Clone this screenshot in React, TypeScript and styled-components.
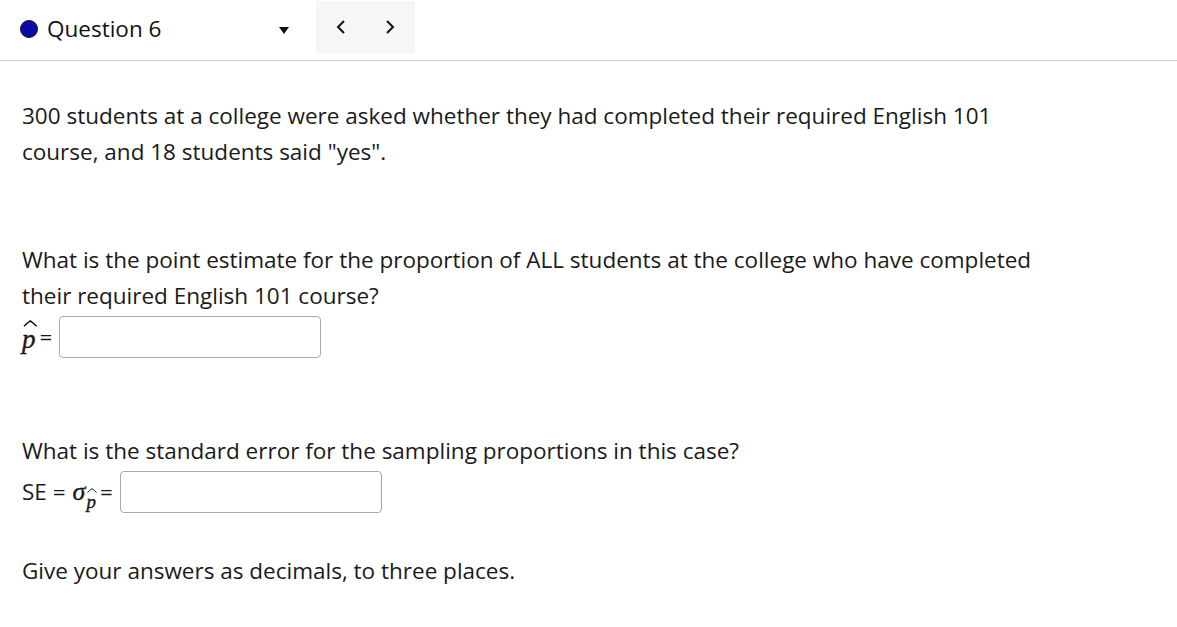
import React, { FC } from "react";
import styled, { createGlobalStyle } from "styled-components";

const GlobalStyle = createGlobalStyle`
  html, body {
    margin: 0;
    padding: 0;
    background: #ffffff;
  }
  body {
    font-family: "Open Sans", "DejaVu Sans", sans-serif;
    color: #1a1a1a;
  }
`;

const StyledHeader = styled.div`
  display: flex;
  align-items: center;
  height: 61px;
  border-bottom: 1px solid #cccccc;
  box-sizing: border-box;
  padding: 0 0 3px 20px;
`;

const StyledDot = styled.span`
  width: 18px;
  height: 18px;
  border-radius: 50%;
  background: #0a0aa8;
  border: 1px solid #111133;
  box-sizing: border-box;
  flex-shrink: 0;
`;

const StyledTitle = styled.span`
  margin-left: 9px;
  font-size: 22.5px;
  width: 232px;
  color: #111111;
`;

const StyledCaret = styled.span`
  width: 0;
  height: 0;
  border-left: 5px solid transparent;
  border-right: 5px solid transparent;
  border-top: 7px solid #111111;
  margin-top: 4px;
`;

const StyledNav = styled.div`
  display: flex;
  align-items: center;
  justify-content: center;
  gap: 19px;
  margin-left: 27px;
  margin-top: -3px;
  width: 99px;
  height: 52px;
  background: #f6f6f6;
`;

const StyledNavButton = styled.button`
  border: none;
  background: transparent;
  padding: 0;
  width: 30px;
  height: 30px;
  display: flex;
  align-items: center;
  justify-content: center;
  cursor: pointer;
`;

const StyledBody = styled.div`
  max-width: 1030px;
  padding: 37px 22px 0 22px;
  font-size: 22.5px;
  line-height: 36px;
  color: #1a1a1a;
`;

const StyledParagraph = styled.p<{ $gap: number }>`
  margin: 0 0 ${({ $gap }) => $gap}px 0;
`;

const StyledAnswerRow = styled.div<{ $gap: number }>`
  display: flex;
  align-items: center;
  height: 46px;
  margin-bottom: ${({ $gap }) => $gap}px;
`;

const StyledMath = styled.span`
  font-family: "Liberation Serif", "DejaVu Serif", serif;
  font-style: italic;
  position: relative;
  display: inline-block;
`;

const StyledHatP = styled(StyledMath)<{ $small?: boolean }>`
  font-size: ${({ $small }) => ($small ? "19px" : "27px")};
  -webkit-text-stroke: 0.4px #1a1a1a;
  line-height: 1;
  margin-top: ${({ $small }) => ($small ? "0" : "4px")};
`;

const StyledHat = styled.svg`
  position: absolute;
  left: 50%;
  transform: translateX(-42%);
  top: -0.2em;
`;

const StyledEquals = styled.span`
  margin: 0 7px 0 4px;
`;

const StyledSigma = styled(StyledMath)`
  font-size: 26px;
  -webkit-text-stroke: 0.4px #1a1a1a;
  margin-left: 7px;
`;

const StyledSub = styled.span`
  display: inline-block;
  position: relative;
  top: 8px;
  margin-left: 1px;
`;

const StyledInput = styled.input`
  width: 262px;
  height: 42px;
  box-sizing: border-box;
  border: 1px solid #a8a8a8;
  border-radius: 4px;
  font-family: inherit;
  font-size: 20px;
  padding: 0 8px;
  outline: none;
`;

const Chevron: FC<{ dir: "left" | "right" }> = ({ dir }) => (
  <svg width="10" height="14" viewBox="0 0 10 14">
    <path
      d={dir === "left" ? "M8 1 L2 7 L8 13" : "M2 1 L8 7 L2 13"}
      fill="none"
      stroke="#111111"
      strokeWidth="2"
    />
  </svg>
);

const HatP: FC<{ small?: boolean }> = ({ small }) => (
  <StyledHatP $small={small}>
    <StyledHat width={small ? 12 : 16} height={small ? 5 : 7} viewBox="0 0 12 6">
      <path
        d="M0.6 5.4 Q3 3 6 0.8 Q9 3 11.4 5.4"
        fill="none"
        stroke="#111"
        strokeWidth="1.2"
      />
    </StyledHat>
    p
  </StyledHatP>
);

export default function App() {
  return (
    <>
      <GlobalStyle />
      <StyledHeader>
        <StyledDot />
        <StyledTitle>Question 6</StyledTitle>
        <StyledCaret />
        <StyledNav>
          <StyledNavButton aria-label="Previous">
            <Chevron dir="left" />
          </StyledNavButton>
          <StyledNavButton aria-label="Next">
            <Chevron dir="right" />
          </StyledNavButton>
        </StyledNav>
      </StyledHeader>
      <StyledBody>
        <StyledParagraph $gap={72}>
          300 students at a college were asked whether they had completed their
          required English 101 course, and 18 students said "yes".
        </StyledParagraph>
        <StyledParagraph $gap={0}>
          What is the point estimate for the proportion of ALL students at the
          college who have completed their required English 101 course?
        </StyledParagraph>
        <StyledAnswerRow $gap={73}>
          <HatP />
          <StyledEquals>=</StyledEquals>
          <StyledInput type="text" />
        </StyledAnswerRow>
        <StyledParagraph $gap={0}>
          What is the standard error for the sampling proportions in this case?
        </StyledParagraph>
        <StyledAnswerRow $gap={38}>
          <span>SE =</span>
          <StyledSigma>
            σ
            <StyledSub>
              <HatP small />
            </StyledSub>
          </StyledSigma>
          <StyledEquals>=</StyledEquals>
          <StyledInput type="text" />
        </StyledAnswerRow>
        <StyledParagraph $gap={0}>
          Give your answers as decimals, to three places.
        </StyledParagraph>
      </StyledBody>
    </>
  );
}
